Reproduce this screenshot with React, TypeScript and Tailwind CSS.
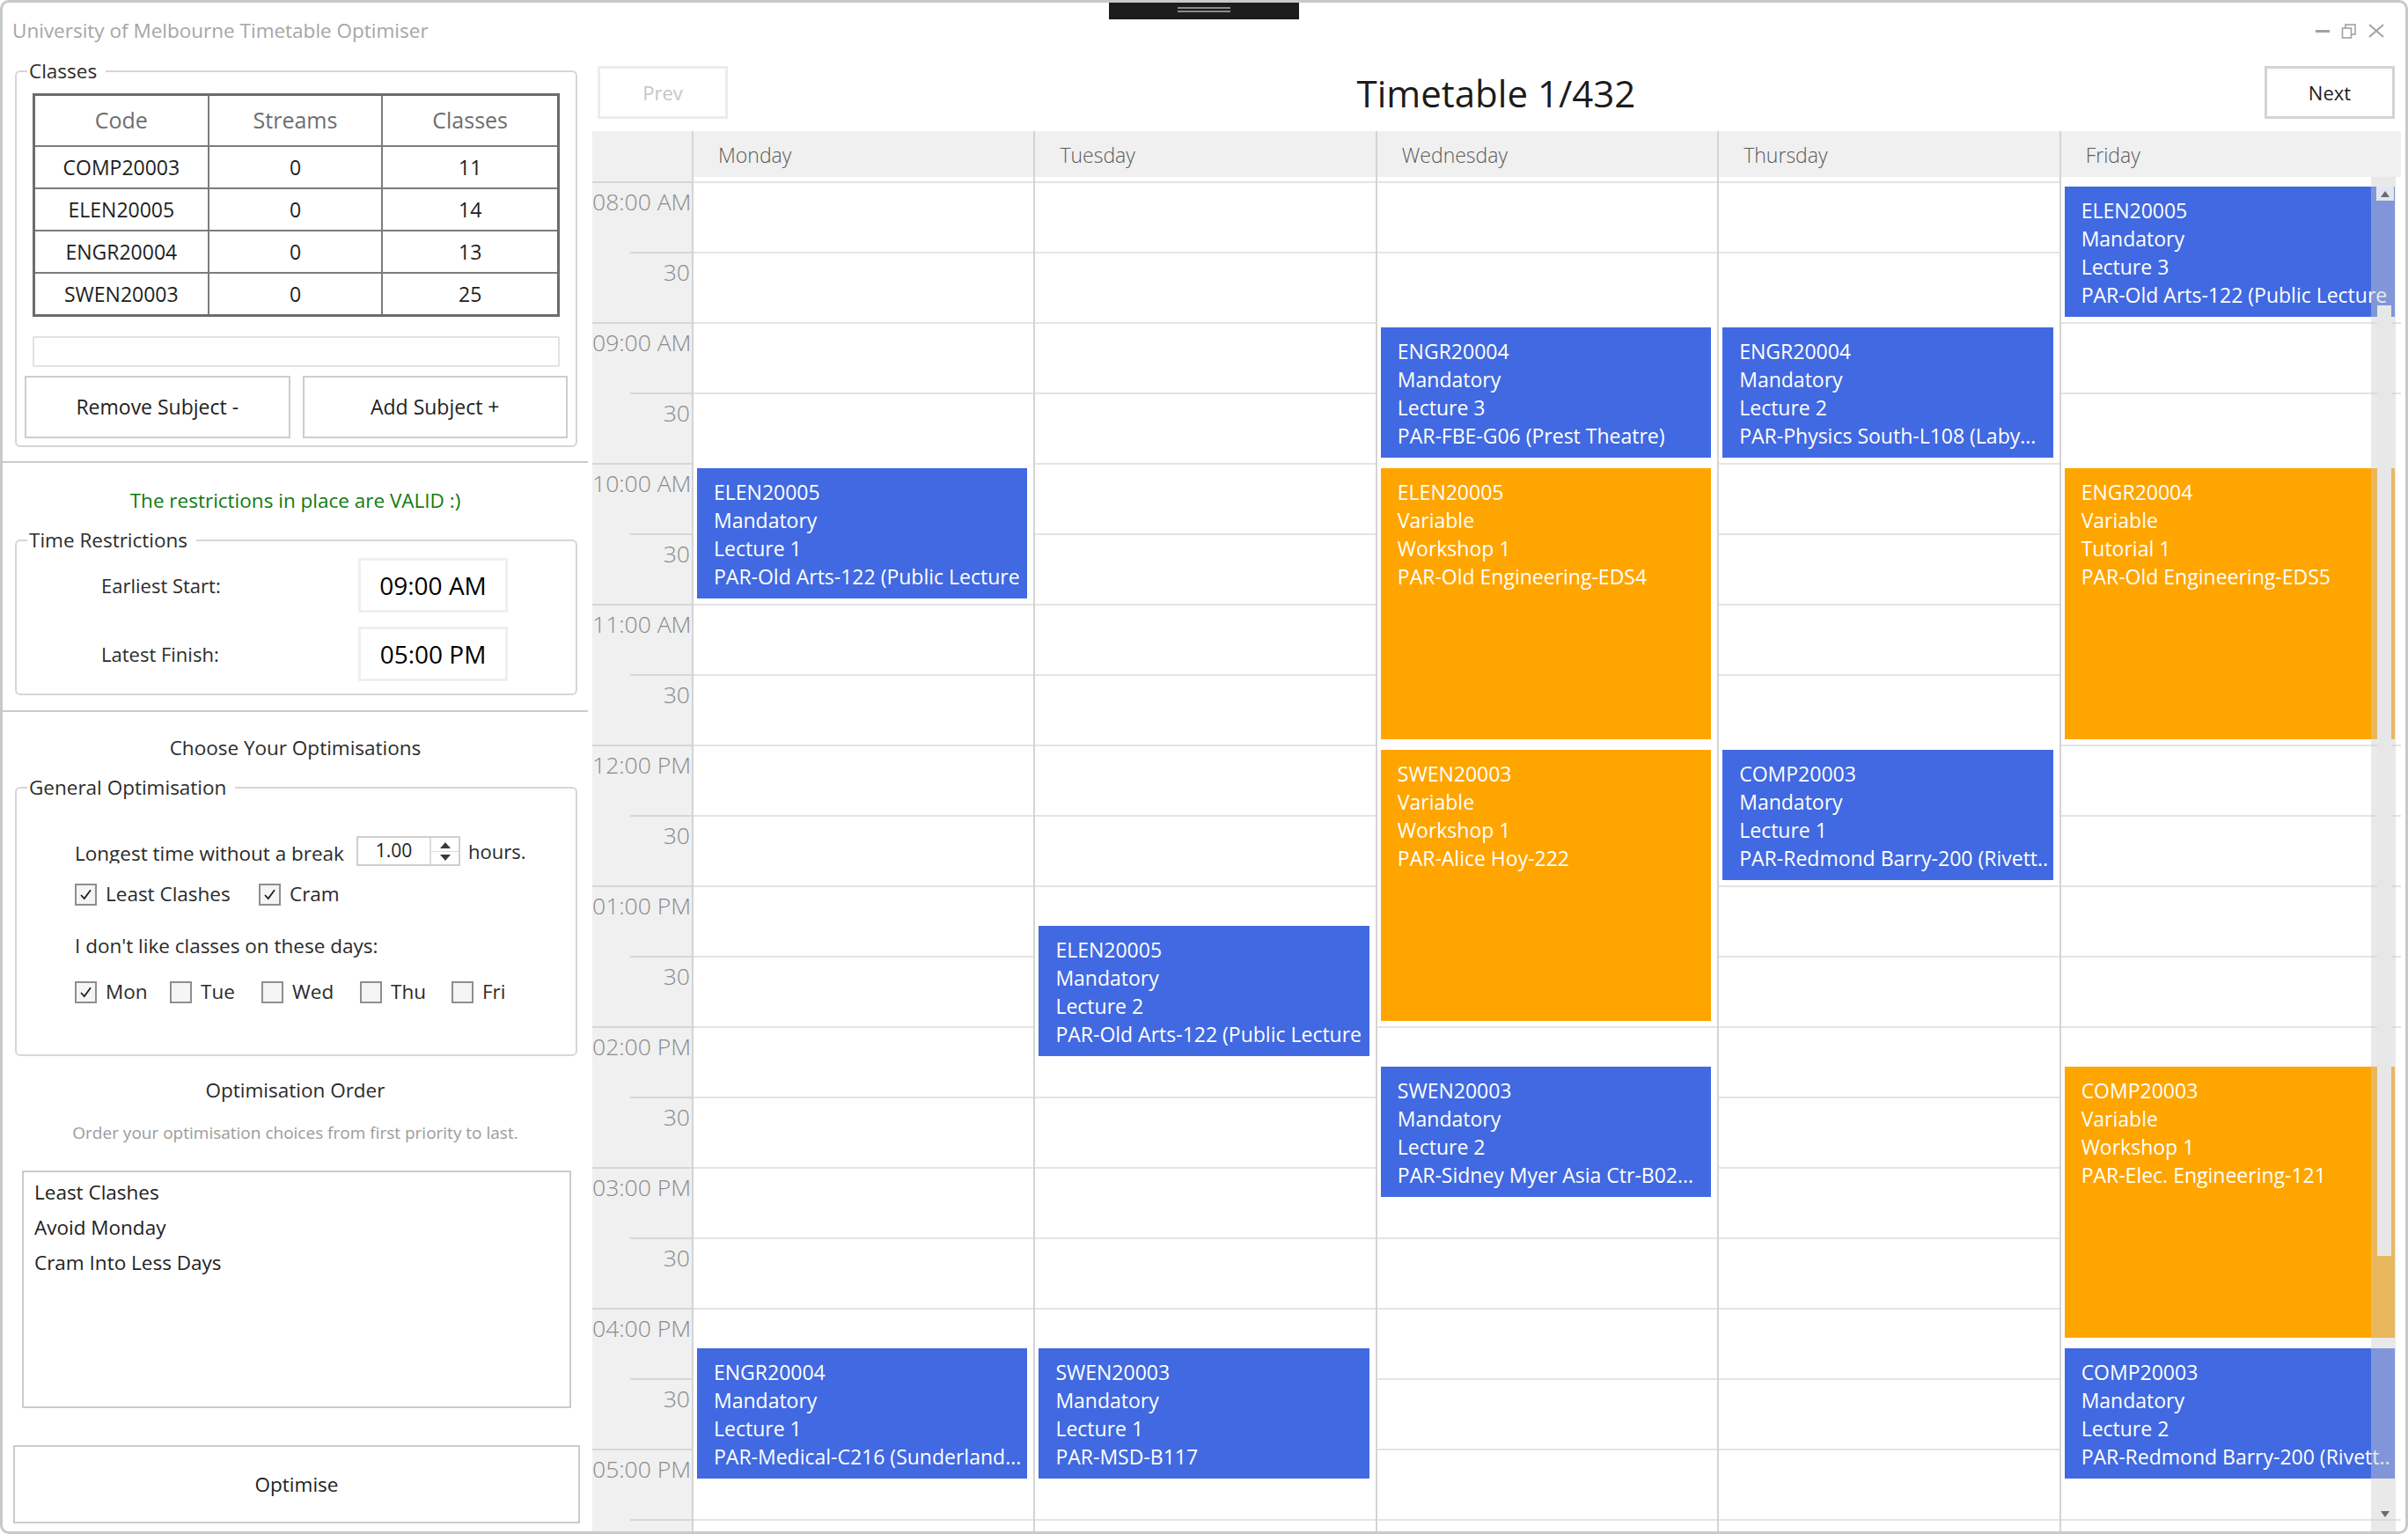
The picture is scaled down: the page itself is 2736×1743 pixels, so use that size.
import React from "react";

type Ev = {
  day: number;
  start: number;
  end: number;
  color: "blue" | "orange";
  lines: string[];
};

const DAYS = ["Monday", "Tuesday", "Wednesday", "Thursday", "Friday"];

const SUBJECTS = [
  { code: "COMP20003", streams: 0, classes: 11 },
  { code: "ELEN20005", streams: 0, classes: 14 },
  { code: "ENGR20004", streams: 0, classes: 13 },
  { code: "SWEN20003", streams: 0, classes: 25 },
];

const EVENTS: Ev[] = [
  { day: 0, start: 600, end: 660, color: "blue", lines: ["ELEN20005", "Mandatory", "Lecture 1", "PAR-Old Arts-122 (Public Lecture"] },
  { day: 0, start: 975, end: 1035, color: "blue", lines: ["ENGR20004", "Mandatory", "Lecture 1", "PAR-Medical-C216 (Sunderland..."] },
  { day: 1, start: 795, end: 855, color: "blue", lines: ["ELEN20005", "Mandatory", "Lecture 2", "PAR-Old Arts-122 (Public Lecture"] },
  { day: 1, start: 975, end: 1035, color: "blue", lines: ["SWEN20003", "Mandatory", "Lecture 1", "PAR-MSD-B117"] },
  { day: 2, start: 540, end: 600, color: "blue", lines: ["ENGR20004", "Mandatory", "Lecture 3", "PAR-FBE-G06 (Prest Theatre)"] },
  { day: 2, start: 600, end: 720, color: "orange", lines: ["ELEN20005", "Variable", "Workshop 1", "PAR-Old Engineering-EDS4"] },
  { day: 2, start: 720, end: 840, color: "orange", lines: ["SWEN20003", "Variable", "Workshop 1", "PAR-Alice Hoy-222"] },
  { day: 2, start: 855, end: 915, color: "blue", lines: ["SWEN20003", "Mandatory", "Lecture 2", "PAR-Sidney Myer Asia Ctr-B02..."] },
  { day: 3, start: 540, end: 600, color: "blue", lines: ["ENGR20004", "Mandatory", "Lecture 2", "PAR-Physics South-L108 (Laby..."] },
  { day: 3, start: 720, end: 780, color: "blue", lines: ["COMP20003", "Mandatory", "Lecture 1", "PAR-Redmond Barry-200 (Rivett.."] },
  { day: 4, start: 480, end: 540, color: "blue", lines: ["ELEN20005", "Mandatory", "Lecture 3", "PAR-Old Arts-122 (Public Lecture"] },
  { day: 4, start: 600, end: 720, color: "orange", lines: ["ENGR20004", "Variable", "Tutorial 1", "PAR-Old Engineering-EDS5"] },
  { day: 4, start: 855, end: 975, color: "orange", lines: ["COMP20003", "Variable", "Workshop 1", "PAR-Elec. Engineering-121"] },
  { day: 4, start: 975, end: 1035, color: "blue", lines: ["COMP20003", "Mandatory", "Lecture 2", "PAR-Redmond Barry-200 (Rivett.."] },
];

const SLOTS = [
  "08:00 AM", "30", "09:00 AM", "30", "10:00 AM", "30", "11:00 AM", "30",
  "12:00 PM", "30", "01:00 PM", "30", "02:00 PM", "30", "03:00 PM", "30",
  "04:00 PM", "30", "05:00 PM", "30",
];

function Check({ checked }: { checked: boolean }) {
  return (
    <span className="flex h-[25px] w-[25px] shrink-0 items-center justify-center border-2 border-[#8e8e8e] bg-[#f5f5f5]">
      {checked && (
        <svg width="17" height="17" viewBox="0 0 17 17">
          <path d="M3 9 L6.8 13 L14 3.2" fill="none" stroke="#1f1f1f" strokeWidth="1.8" />
        </svg>
      )}
    </span>
  );
}

function CheckItem({ label, checked, w }: { label: string; checked: boolean; w?: string }) {
  return (
    <div className={"flex items-center gap-[10px] " + (w ?? "")}>
      <Check checked={checked} />
      <span className="text-[22.5px] leading-[26px] text-[#2a2a2a]">{label}</span>
    </div>
  );
}

function Legend({ children }: { children: React.ReactNode }) {
  return (
    <legend className="ml-[12px] pl-[2px] pr-[10px] text-[22.5px] leading-[28px] text-[#2c2c2c]">
      {children}
    </legend>
  );
}

function TimeBox({ value }: { value: string }) {
  return (
    <div className="flex h-[62px] w-[170px] items-center justify-center border-[3px] border-[#efefef] text-[28px] text-black">
      {value}
    </div>
  );
}

function EventBlock({ ev }: { ev: Ev }) {
  const top = 5 + ((ev.start - 480) * 8) / 3;
  const height = ((ev.end - ev.start) * 8) / 3;
  return (
    <div
      className="absolute left-0 right-0 bg-white pb-[6px] pl-[4px] pr-[7px] pt-[6px]"
      style={{ top, height }}
    >
      <div
        className={
          "h-full overflow-hidden whitespace-nowrap pl-[19px] pt-[11px] text-[23px] leading-[32px] text-white " +
          (ev.color === "blue" ? "bg-[#4169e1]" : "bg-[#ffa500]")
        }
      >
        {ev.lines.map((l, i) => (
          <div key={i}>{l}</div>
        ))}
      </div>
    </div>
  );
}

function LeftPanel() {
  return (
    <div className="flex w-[665px] shrink-0 flex-col">
      {/* Classes */}
      <fieldset className="ml-[14px] w-[639px] rounded-[6px] border-2 border-[#d6d6d6]">
        <Legend>Classes</Legend>
        <div className="px-[9px] pb-[8px]">
          <div className="mx-[9px] mt-[11px] border-[3px] border-[#6c6c6c]">
            <div className="grid h-[56px] grid-cols-3 text-[25px] text-[#6e6e6e]">
              <div className="flex items-center justify-center border-r-2 border-[#7c7c7c]">Code</div>
              <div className="flex items-center justify-center border-r-2 border-[#7c7c7c]">Streams</div>
              <div className="flex items-center justify-center">Classes</div>
            </div>
            {SUBJECTS.map((s) => (
              <div key={s.code} className="grid h-[48px] grid-cols-3 border-t-2 border-[#7c7c7c] text-[23px] text-[#1e1e1e]">
                <div className="flex items-center justify-center border-r-2 border-[#7c7c7c]">{s.code}</div>
                <div className="flex items-center justify-center border-r-2 border-[#7c7c7c]">{s.streams}</div>
                <div className="flex items-center justify-center">{s.classes}</div>
              </div>
            ))}
          </div>
          <div className="mx-[9px] mt-[22px] h-[35px] rounded-[2px] border-2 border-[#e2e2e2]" />
          <div className="mt-[10px] flex gap-[14px]">
            <button className="h-[71px] flex-1 border-2 border-[#cdcdcd] bg-white text-[23px] text-[#222]">
              Remove Subject -
            </button>
            <button className="h-[71px] flex-1 border-2 border-[#cdcdcd] bg-white text-[23px] text-[#222]">
              Add Subject +
            </button>
          </div>
        </div>
      </fieldset>

      <div className="mt-[16px] h-[2px] bg-[#cbcbcb]" />

      <div className="mt-[28px] h-[30px] text-center text-[22.5px] leading-[30px] text-[#0f7b0f]">
        The restrictions in place are VALID :)
      </div>

      {/* Time restrictions */}
      <fieldset className="ml-[14px] mt-[16px] w-[639px] rounded-[6px] border-2 border-[#d6d6d6]">
        <Legend>Time Restrictions</Legend>
        <div className="pb-[14px]">
          <div className="mt-[6px] flex items-center">
            <span className="w-[388px] pl-[96px] text-[22px] text-[#2c2c2c]">Earliest Start:</span>
            <TimeBox value="09:00 AM" />
          </div>
          <div className="mt-[16px] flex items-center">
            <span className="w-[388px] pl-[96px] text-[22px] text-[#2c2c2c]">Latest Finish:</span>
            <TimeBox value="05:00 PM" />
          </div>
        </div>
      </fieldset>

      <div className="mt-[17px] h-[2px] bg-[#cbcbcb]" />

      <div className="mt-[26px] h-[30px] text-center text-[22.5px] leading-[30px] text-[#2c2c2c]">
        Choose Your Optimisations
      </div>

      {/* General optimisation */}
      <fieldset className="ml-[14px] mt-[16px] w-[639px] rounded-[6px] border-2 border-[#d6d6d6]">
        <Legend>General Optimisation</Legend>
        <div className="pb-[58px] pl-[66px]">
          <div className="mt-[41px] flex h-[34px] items-start">
            <span className="mt-[5px] block h-[26px] w-[320px] overflow-hidden text-[22.5px] leading-[30px] text-[#2a2a2a]">
              Longest time without a break
            </span>
            <div className="flex h-[34px] w-[118px] border-2 border-[#cfcfcf]">
              <div className="flex flex-1 items-center justify-center text-[21px] text-[#222]">1.00</div>
              <div className="flex w-[33px] flex-col items-center justify-center gap-[3px] border-l-2 border-[#dcdcdc]">
                <svg width="12" height="7" viewBox="0 0 12 7">
                  <path d="M0 7 L6 0 L12 7 Z" fill="#3a3a3a" />
                </svg>
                <div className="h-px w-full bg-[#dcdcdc]" />
                <svg width="12" height="7" viewBox="0 0 12 7">
                  <path d="M0 0 L6 7 L12 0 Z" fill="#3a3a3a" />
                </svg>
              </div>
            </div>
            <span className="ml-[9px] mt-[2px] text-[22px] leading-[30px] text-[#2a2a2a]">hours.</span>
          </div>
          <div className="mt-[19px] flex">
            <CheckItem label="Least Clashes" checked w="w-[209px]" />
            <CheckItem label="Cram" checked />
          </div>
          <div className="mt-[31px] h-[30px] text-[22.5px] leading-[30px] text-[#2a2a2a]">
            I don't like classes on these days:
          </div>
          <div className="mt-[24px] flex">
            <CheckItem label="Mon" checked w="w-[108px]" />
            <CheckItem label="Tue" checked={false} w="w-[104px]" />
            <CheckItem label="Wed" checked={false} w="w-[112px]" />
            <CheckItem label="Thu" checked={false} w="w-[104px]" />
            <CheckItem label="Fri" checked={false} />
          </div>
        </div>
      </fieldset>

      <div className="mt-[24px] h-[30px] text-center text-[22.5px] leading-[30px] text-[#2a2a2a]">
        Optimisation Order
      </div>
      <div className="mt-[20px] h-[26px] text-center text-[19px] leading-[26px] text-[#9b9b9b]">
        Order your optimisation choices from first priority to last.
      </div>

      <div className="ml-[22px] mt-[30px] h-[270px] w-[624px] border-2 border-[#cbcbcb] pl-[12px] pt-[3px] text-[22.5px] leading-[40px] text-[#222]">
        <div>Least Clashes</div>
        <div>Avoid Monday</div>
        <div>Cram Into Less Days</div>
      </div>

      <button className="ml-[12px] mt-[42px] h-[89px] w-[644px] border-2 border-[#cbcbcb] bg-white text-[22.5px] text-[#222]">
        Optimise
      </button>
    </div>
  );
}

function Timetable() {
  return (
    <div className="relative ml-[5px] mr-[5px] mt-[14px] flex min-h-0 flex-1 overflow-hidden">
      {/* time column */}
      <div className="w-[115px] shrink-0 border-r-2 border-[#d4d4d4] bg-[#f0f0f0]">
        <div className="h-[57px]" />
        {SLOTS.map((s, i) => (
          <div key={i} className="relative h-[80px]">
            <div
              className={
                "absolute right-0 top-0 h-[2px] bg-[#d6d6d6] " + (i % 2 === 0 ? "left-0" : "left-[43px]")
              }
            />
            <div className="whitespace-nowrap pr-[2px] pt-[8px] text-right text-[26.5px] font-light leading-[30px] text-[#8a8a8a]">
              {s}
            </div>
          </div>
        ))}
      </div>
      {/* day columns */}
      {DAYS.map((d, di) => (
        <div key={d} className={"flex flex-1 flex-col " + (di > 0 ? "border-l-2 border-[#d4d4d4]" : "")}>
          <div className="flex h-[52px] shrink-0 items-center bg-[#f0f0f0] pl-[28px] pt-[2px] text-[23px] font-light text-[#5a5a5a]">
            {d}
          </div>
          <div className="relative pt-[5px]">
            {SLOTS.map((_, i) => (
              <div key={i} className="h-[80px] border-t-2 border-[#e4e4e4]" />
            ))}
            {EVENTS.filter((e) => e.day === di).map((e, i) => (
              <EventBlock key={i} ev={e} />
            ))}
          </div>
        </div>
      ))}

      {/* overlay scrollbar */}
      <div className="absolute bottom-0 right-[6px] top-[52px] w-[28px] bg-[rgba(206,206,206,0.45)]">
        <div className="absolute left-[6px] top-[11px] flex h-[16px] w-[20px] items-center justify-center bg-[rgba(245,245,245,0.85)]">
          <svg width="10" height="7" viewBox="0 0 10 7">
            <path d="M0 7 L5 0 L10 7 Z" fill="#6a6a6a" />
          </svg>
        </div>
        <div className="absolute left-[7px] top-[146px] h-[1080px] w-[16px] bg-[#e7e7e7]" />
        <div className="absolute bottom-[12px] left-[6px] flex h-[16px] w-[20px] items-center justify-center">
          <svg width="10" height="7" viewBox="0 0 10 7">
            <path d="M0 0 L5 7 L10 0 Z" fill="#6a6a6a" />
          </svg>
        </div>
      </div>
    </div>
  );
}

export default function App() {
  return (
    <div className="h-[1743px] w-[2736px] overflow-hidden bg-white font-['Open_Sans','Noto_Sans',sans-serif]">
      <div className="relative flex h-full w-full flex-col overflow-hidden rounded-[10px] border-[3px] border-[#c9c9c9] bg-white">
        {/* dark drag tab */}
        <div className="absolute -top-[3px] left-[1257px] flex h-[22px] w-[216px] flex-col items-center justify-center gap-[2px] bg-[#1d1d1d]">
          <div className="h-[2px] w-[60px] bg-[#8a8a8a]" />
          <div className="h-[2px] w-[60px] bg-[#8a8a8a]" />
        </div>

        {/* window controls */}
        <div className="absolute right-[23px] top-[22px] flex items-center gap-[12px]">
          <svg width="18" height="20" viewBox="0 0 18 20">
            <rect x="1" y="9" width="16" height="3" fill="#a2a2a2" />
          </svg>
          <svg width="18" height="20" viewBox="0 0 18 20">
            <rect x="5" y="3" width="11" height="11" fill="none" stroke="#a2a2a2" strokeWidth="1.6" />
            <rect x="1.5" y="7" width="10" height="11" fill="white" stroke="#a2a2a2" strokeWidth="1.6" />
          </svg>
          <svg width="20" height="20" viewBox="0 0 20 20">
            <path d="M2 3 L18 17 M18 3 L2 17" stroke="#a2a2a2" strokeWidth="2" />
          </svg>
        </div>

        {/* title bar */}
        <div className="flex h-[64px] shrink-0 items-center pl-[11px] text-[22.5px] text-[#a6a6a6]">
          University of Melbourne Timetable Optimiser
        </div>

        <div className="flex min-h-0 flex-1">
          <LeftPanel />
          <div className="flex min-w-0 flex-1 flex-col">
            <div className="ml-[11px] mr-[12px] mt-[8px] flex h-[60px] shrink-0 items-center justify-between">
              <button className="h-[60px] w-[148px] border-[3px] border-[#ececec] bg-white text-[22px] text-[#c6c6c6]">
                Prev
              </button>
              <div className="text-[42px] text-[#1c1c1c]">Timetable 1/432</div>
              <button className="h-[60px] w-[148px] border-[3px] border-[#d3d3d3] bg-white text-[22px] text-[#1e1e1e]">
                Next
              </button>
            </div>
            <Timetable />
          </div>
        </div>
      </div>
    </div>
  );
}
